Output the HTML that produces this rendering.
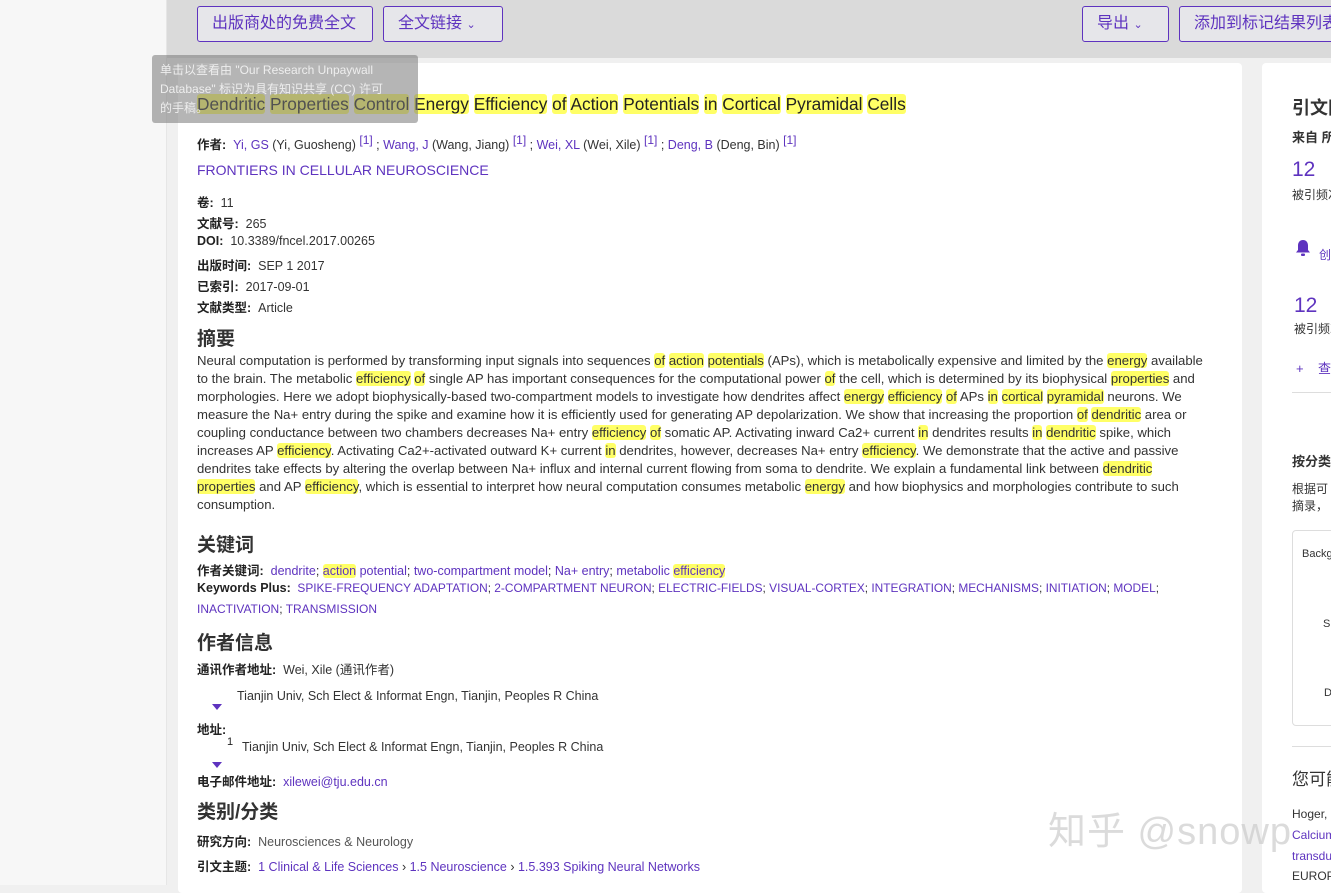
<!DOCTYPE html>
<html><head><meta charset="utf-8"><style>
*{margin:0;padding:0;box-sizing:border-box}
body{width:1331px;height:885px;overflow:hidden;background:#f0f0f0;font-family:"Liberation Sans","Noto Sans CJK SC",sans-serif;color:#222;position:relative}
.ab{position:absolute;white-space:nowrap}
.lstrip{position:absolute;left:0;top:0;width:167px;height:885px;background:#f7f7f7;border-right:1px solid #e6e6e6}
.top{position:absolute;left:167px;top:0;width:1164px;height:58px;background:#dadada}
.btn{position:absolute;top:6px;height:36px;border:1.5px solid #5e33bf;border-radius:3px;color:#5e33bf;font-size:16px;line-height:33px;padding:0 14px;background:#e6e6ea;white-space:nowrap}
.card{position:absolute;left:178px;top:63px;width:1064px;height:830px;background:#fff;border-radius:4px}
.rcard{position:absolute;left:1262px;top:63px;width:80px;height:830px;background:#fff;border-radius:4px}
.hl{background:#ffff66;border-radius:3px}
a,.lk{color:#5e33bf;text-decoration:none}
.lab{font-weight:bold;font-size:12.5px;color:#222}
.v{font-size:12.5px;color:#333}
.h2{font-size:19px;font-weight:bold;color:#333}
.abs{font-size:13.15px;line-height:18px;color:#333}
.sup{font-size:12px;color:#5e33bf;position:relative;top:-5px}
.tri{display:inline-block;width:0;height:0;border-left:5px solid transparent;border-right:5px solid transparent;border-top:6px solid #5e33bf}
.tip{position:absolute;left:152px;top:55px;width:266px;height:68px;background:rgba(120,120,120,.55);border-radius:3px;color:#eee;font-size:12px;line-height:19px;padding:6px 8px;z-index:5;white-space:nowrap}
</style></head><body>
<div class="lstrip"></div>
<div class="top"></div>
<div class="btn" style="left:197px;width:176px">出版商处的免费全文</div>
<div class="btn" style="left:383px;width:120px">全文链接 <span style="font-size:11px">⌄</span></div>
<div class="btn" style="left:1082px;width:87px">导出 <span style="font-size:11px">⌄</span></div>
<div class="btn" style="left:1179px;width:170px">添加到标记结果列表</div>
<div class="card"></div>
<div class="rcard"></div>

<div class="ab" style="left:197px;top:94px;font-size:17.3px;color:#222"><span class="hl">Dendritic</span> <span class="hl">Properties</span> <span class="hl">Control</span> <span class="hl">Energy</span> <span class="hl">Efficiency</span> <span class="hl">of</span> <span class="hl">Action</span> <span class="hl">Potentials</span> <span class="hl">in</span> <span class="hl">Cortical</span> <span class="hl">Pyramidal</span> <span class="hl">Cells</span></div>
<div class="tip">单击以查看由 "Our Research Unpaywall<br>Database" 标识为具有知识共享 (CC) 许可<br>的手稿。</div>

<div class="ab v" style="left:197px;top:134px"><span class="lab">作者:</span>&nbsp; <a>Yi, GS</a> (Yi, Guosheng) <span class="sup">[1]</span> ; <a>Wang, J</a> (Wang, Jiang) <span class="sup">[1]</span> ; <a>Wei, XL</a> (Wei, Xile) <span class="sup">[1]</span> ; <a>Deng, B</a> (Deng, Bin) <span class="sup">[1]</span></div>
<div class="ab" style="left:197px;top:162px;font-size:14px;color:#5e33bf">FRONTIERS IN CELLULAR NEUROSCIENCE</div>
<div class="ab v" style="left:197px;top:192px"><span class="lab">卷:</span>&nbsp; 11</div>
<div class="ab v" style="left:197px;top:213px"><span class="lab">文献号:</span>&nbsp; 265</div>
<div class="ab v" style="left:197px;top:234px"><span class="lab">DOI:</span>&nbsp; 10.3389/fncel.2017.00265</div>
<div class="ab v" style="left:197px;top:255px"><span class="lab">出版时间:</span>&nbsp; SEP 1 2017</div>
<div class="ab v" style="left:197px;top:276px"><span class="lab">已索引:</span>&nbsp; 2017-09-01</div>
<div class="ab v" style="left:197px;top:297px"><span class="lab">文献类型:</span>&nbsp; Article</div>

<div class="ab h2" style="left:197px;top:324px">摘要</div>
<div class="ab abs" style="left:197px;top:352px">
Neural computation is performed by transforming input signals into sequences <span class="hl">of</span> <span class="hl">action</span> <span class="hl">potentials</span> (APs), which is metabolically expensive and limited by the <span class="hl">energy</span> available<br>
to the brain. The metabolic <span class="hl">efficiency</span> <span class="hl">of</span> single AP has important consequences for the computational power <span class="hl">of</span> the cell, which is determined by its biophysical <span class="hl">properties</span> and<br>
morphologies. Here we adopt biophysically-based two-compartment models to investigate how dendrites affect <span class="hl">energy</span> <span class="hl">efficiency</span> <span class="hl">of</span> APs <span class="hl">in</span> <span class="hl">cortical</span> <span class="hl">pyramidal</span> neurons. We<br>
measure the Na+ entry during the spike and examine how it is efficiently used for generating AP depolarization. We show that increasing the proportion <span class="hl">of</span> <span class="hl">dendritic</span> area or<br>
coupling conductance between two chambers decreases Na+ entry <span class="hl">efficiency</span> <span class="hl">of</span> somatic AP. Activating inward Ca2+ current <span class="hl">in</span> dendrites results <span class="hl">in</span> <span class="hl">dendritic</span> spike, which<br>
increases AP <span class="hl">efficiency</span>. Activating Ca2+-activated outward K+ current <span class="hl">in</span> dendrites, however, decreases Na+ entry <span class="hl">efficiency</span>. We demonstrate that the active and passive<br>
dendrites take effects by altering the overlap between Na+ influx and internal current flowing from soma to dendrite. We explain a fundamental link between <span class="hl">dendritic</span><br>
<span class="hl">properties</span> and AP <span class="hl">efficiency</span>, which is essential to interpret how neural computation consumes metabolic <span class="hl">energy</span> and how biophysics and morphologies contribute to such<br>
consumption.</div>

<div class="ab h2" style="left:197px;top:530px">关键词</div>
<div class="ab v" style="left:197px;top:560px"><span class="lab">作者关键词:</span>&nbsp; <a>dendrite</a>; <a class="hl">action</a> <a>potential</a>; <a>two-compartment model</a>; <a>Na+ entry</a>; <a>metabolic</a> <a class="hl">efficiency</a></div>
<div class="ab v" style="left:197px;top:581px;font-size:11.9px"><span class="lab">Keywords Plus:</span>&nbsp; <a>SPIKE-FREQUENCY ADAPTATION</a>; <a>2-COMPARTMENT NEURON</a>; <a>ELECTRIC-FIELDS</a>; <a>VISUAL-CORTEX</a>; <a>INTEGRATION</a>; <a>MECHANISMS</a>; <a>INITIATION</a>; <a>MODEL</a>;</div>
<div class="ab v" style="left:197px;top:602px;font-size:12px"><a>INACTIVATION</a>; <a>TRANSMISSION</a></div>

<div class="ab h2" style="left:197px;top:628px">作者信息</div>
<div class="ab v" style="left:197px;top:659px"><span class="lab">通讯作者地址:</span>&nbsp; Wei, Xile (通讯作者)</div>
<div class="ab" style="left:212px;top:697px"><span class="tri"></span></div>
<div class="ab v" style="left:237px;top:689px">Tianjin Univ, Sch Elect &amp; Informat Engn, Tianjin, Peoples R China</div>
<div class="ab lab" style="left:197px;top:719px">地址:</div>
<div class="ab" style="left:227px;top:736px;font-size:11px">1</div>
<div class="ab" style="left:212px;top:755px"><span class="tri"></span></div>
<div class="ab v" style="left:242px;top:740px">Tianjin Univ, Sch Elect &amp; Informat Engn, Tianjin, Peoples R China</div>
<div class="ab v" style="left:197px;top:771px"><span class="lab">电子邮件地址:</span>&nbsp; <a>xilewei@tju.edu.cn</a></div>

<div class="ab h2" style="left:197px;top:797px">类别/分类</div>
<div class="ab v" style="left:197px;top:831px"><span class="lab">研究方向:</span>&nbsp; <span style="color:#555">Neurosciences &amp; Neurology</span></div>
<div class="ab v" style="left:197px;top:856px"><span class="lab">引文主题:</span>&nbsp; <a>1 Clinical &amp; Life Sciences</a> › <a>1.5 Neuroscience</a> › <a>1.5.393 Spiking Neural Networks</a></div>

<!-- right card -->
<div class="ab" style="left:1292px;top:94px;font-size:18px;font-weight:bold;color:#333">引文网络</div>
<div class="ab" style="left:1292px;top:127px;font-size:13px;font-weight:bold;color:#333">来自 所有数据库</div>
<div class="ab" style="left:1292px;top:158px;font-size:21px;color:#5e33bf">12</div>
<div class="ab" style="left:1292px;top:186px;font-size:12px;color:#333">被引频次</div>
<svg class="ab" style="left:1295px;top:239px" width="16" height="18" viewBox="0 0 16 18"><path d="M8 1c-3 0-5 2.3-5 5.5V11L1 13.5h14L13 11V6.5C13 3.3 11 1 8 1z" fill="#5e33bf"/><rect x="6" y="14.5" width="4" height="2.5" rx="1" fill="#5e33bf"/></svg>
<div class="ab" style="left:1319px;top:246px;font-size:12px;color:#5e33bf">创建引文跟踪</div>
<div class="ab" style="left:1294px;top:294px;font-size:21px;color:#5e33bf">12</div>
<div class="ab" style="left:1294px;top:320px;font-size:12px;color:#333">被引频次</div>
<div class="ab" style="left:1296px;top:358px;font-size:13px;color:#5e33bf">+&nbsp;&nbsp;&nbsp; 查看</div>
<div class="ab" style="left:1292px;top:392px;width:40px;height:1px;background:#ddd"></div>
<div class="ab" style="left:1292px;top:451px;font-size:13px;font-weight:bold;color:#333">按分类</div>
<div class="ab" style="left:1292px;top:481px;font-size:12px;line-height:17px;color:#333">根据可<br>摘录，</div>
<div class="ab" style="left:1292px;top:530px;width:60px;height:196px;border:1px solid #ddd;border-radius:4px"></div>
<div class="ab" style="left:1302px;top:548px;font-size:11px;color:#333">Backg</div>
<div class="ab" style="left:1323px;top:618px;font-size:11px;color:#333">Su</div>
<div class="ab" style="left:1324px;top:687px;font-size:11px;color:#333">D</div>
<div class="ab" style="left:1292px;top:746px;width:40px;height:1px;background:#ddd"></div>
<div class="ab" style="left:1292px;top:765px;font-size:17px;color:#333">您可能</div>
<div class="ab" style="left:1292px;top:807px;font-size:12px;color:#333">Hoger,</div>
<div class="ab" style="left:1292px;top:828px;font-size:12px;color:#5e33bf">Calcium</div>
<div class="ab" style="left:1292px;top:849px;font-size:12px;color:#5e33bf">transdu</div>
<div class="ab" style="left:1292px;top:869px;font-size:12px;color:#333">EUROP</div>

<div class="ab" style="left:1048px;top:800px;font-size:38px;letter-spacing:1px;color:rgba(200,200,200,.65);z-index:6">知乎 @snowp</div>
</body></html>
